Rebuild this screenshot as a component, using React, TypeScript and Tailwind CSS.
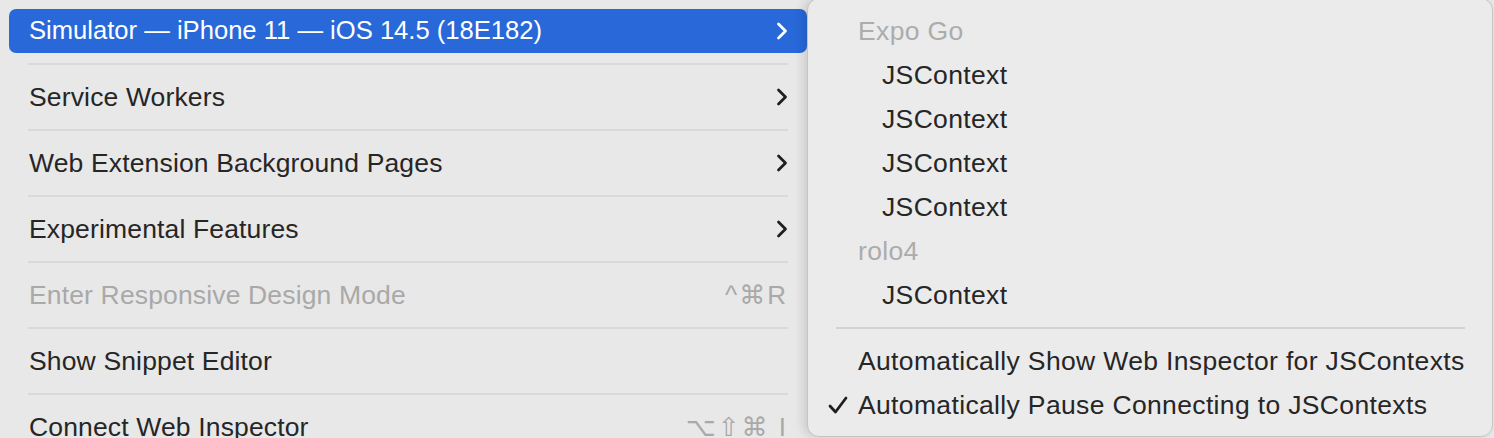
import React from "react";

const font = { fontFamily: '"Liberation Sans", "DejaVu Sans", Arial, sans-serif' };

function Chevron({ color }: { color: string }) {
  return (
    <svg width="12" height="18" viewBox="0 0 12 18" fill="none">
      <path d="M2.5 2 L9.5 9 L2.5 16" stroke={color} strokeWidth="2.8" strokeLinecap="round" strokeLinejoin="round" />
    </svg>
  );
}

function Sep() {
  return (
    <div className="h-[22px] flex items-center px-[19px]">
      <div className="h-[2px] w-full bg-[#dadada]" />
    </div>
  );
}

function Row({
  label,
  chevron,
  shortcut,
  disabled,
  active,
}: {
  label: string;
  chevron?: boolean;
  shortcut?: string;
  disabled?: boolean;
  active?: boolean;
}) {
  return (
    <div
      className={
        "h-[44px] flex items-center justify-between pl-[20px] pr-[19px] rounded-[7px] " +
        (active ? "bg-[#2868d9] text-white" : disabled ? "text-[#a9a9a9]" : "text-[#262626]")
      }
    >
      <span
        className={
          "leading-none whitespace-nowrap " +
          (active ? "text-[25.6px] tracking-[0px]" : "text-[26.5px] tracking-[0.15px]")
        }
      >
        {label}
      </span>
      {chevron && <Chevron color={active ? "#ffffff" : "#1f1f1f"} />}
      {shortcut && (
        <span className="text-[26px] leading-none text-[#a9a9a9] tracking-[2px] whitespace-nowrap">{shortcut}</span>
      )}
    </div>
  );
}

function SubRow({ label, kind, checked }: { label: string; kind: "header" | "item" | "option"; checked?: boolean }) {
  return (
    <div
      className={
        "h-[44px] flex items-center relative " +
        (kind === "item" ? "pl-[74px] text-[#262626]" : kind === "header" ? "pl-[50px] text-[#acacac]" : "pl-[50px] text-[#262626]")
      }
    >
      {checked && (
        <svg className="absolute left-[20px] top-[13px]" width="20" height="18" viewBox="0 0 20 18" fill="none">
          <path d="M2 10 L7.5 16 L18 2" stroke="#1f1f1f" strokeWidth="2.8" strokeLinecap="round" strokeLinejoin="round" />
        </svg>
      )}
      <span className="text-[26.5px] tracking-[0.35px] leading-none whitespace-nowrap">{label}</span>
    </div>
  );
}

export default function App() {
  return (
    <div className="w-[1494px] h-[438px] overflow-hidden bg-[#e8e8e8] relative" style={font}>
      <div className="w-[798px] ml-[9px] pt-[9px] flex flex-col">
        <Row label="Simulator — iPhone 11 — iOS 14.5 (18E182)" chevron active />
        <Sep />
        <Row label="Service Workers" chevron />
        <Sep />
        <Row label="Web Extension Background Pages" chevron />
        <Sep />
        <Row label="Experimental Features" chevron />
        <Sep />
        <Row label="Enter Responsive Design Mode" shortcut="^⌘R" disabled />
        <Sep />
        <Row label="Show Snippet Editor" />
        <Sep />
        <Row label="Connect Web Inspector" shortcut="⌥⇧⌘ I" />
      </div>

      <div className="absolute left-[807px] top-[-2px] w-[686px] h-[439px] rounded-[12px] bg-[#ebebeb] border border-[#c4c4c4] shadow-[-4px_0_10px_rgba(0,0,0,0.12)] pt-[10px] flex flex-col">
        <SubRow label="Expo Go" kind="header" />
        <SubRow label="JSContext" kind="item" />
        <SubRow label="JSContext" kind="item" />
        <SubRow label="JSContext" kind="item" />
        <SubRow label="JSContext" kind="item" />
        <SubRow label="rolo4" kind="header" />
        <SubRow label="JSContext" kind="item" />
        <div className="h-[22px] flex items-center pl-[28px] pr-[27px]">
          <div className="h-[2px] w-full bg-[#d2d2d2]" />
        </div>
        <SubRow label="Automatically Show Web Inspector for JSContexts" kind="option" />
        <SubRow label="Automatically Pause Connecting to JSContexts" kind="option" checked />
      </div>
    </div>
  );
}
